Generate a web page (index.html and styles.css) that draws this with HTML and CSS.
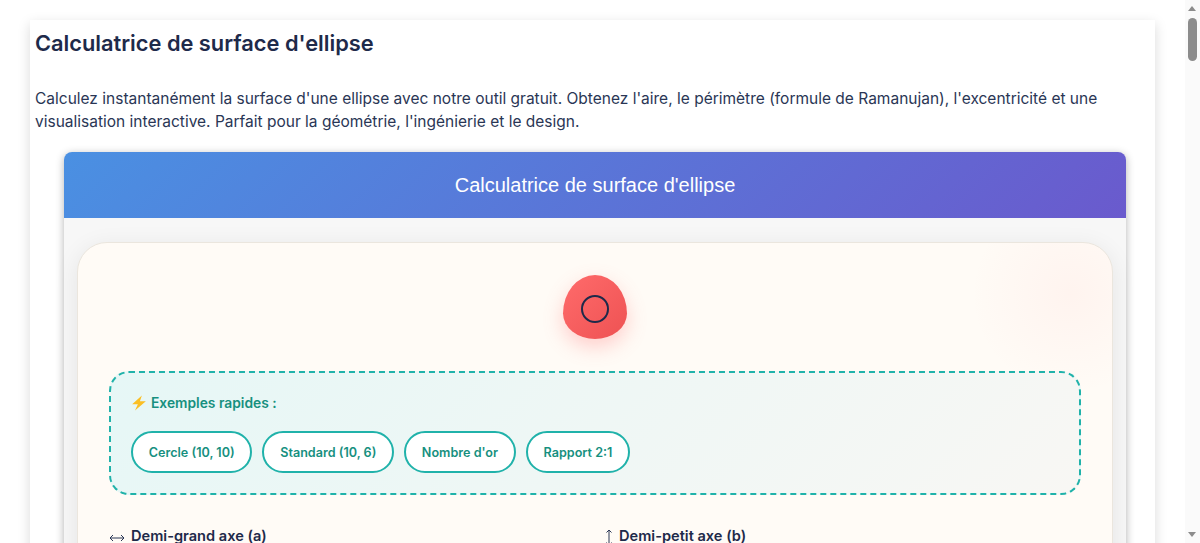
FILE: index.html
```html
<!DOCTYPE html>
<html lang="fr">
<head>
    <meta charset="UTF-8">
    <meta name="viewport" content="width=device-width, initial-scale=1.0">
    <title>Calculatrice de surface d'ellipse</title>
    <link rel="stylesheet" href="styles.css">
</head>
<body>
    <div class="page">
        <main class="article">
            <h1>Calculatrice de surface d'ellipse</h1>
            <p class="intro">Calculez instantanément la surface d'une ellipse avec notre outil gratuit. Obtenez l'aire, le périmètre (formule de Ramanujan), l'excentricité et une visualisation interactive. Parfait pour la géométrie, l'ingénierie et le design.</p>

            <section class="tool">
                <div class="tool-header">Calculatrice de surface d'ellipse</div>
                <div class="tool-body">
                    <div class="calc-card">
                        <div class="calc-icon">
                            <svg width="30" height="30" viewBox="0 0 30 30" aria-hidden="true">
                                <circle cx="15" cy="15" r="13" fill="none" stroke="#1e2a4a" stroke-width="2"/>
                            </svg>
                        </div>

                        <div class="quick">
                            <div class="quick-title">
                                <svg class="bolt" width="16" height="16" viewBox="0 0 14 14" aria-hidden="true">
                                    <path d="M9.5 0.5 L1 8 L6 8 L3.5 13.5 L13 5.5 L7.8 5.5 Z" fill="#fbbf24"/>
                                </svg>
                                Exemples rapides :
                            </div>
                            <div class="quick-buttons">
                                <button class="quick-btn">Cercle (10, 10)</button>
                                <button class="quick-btn">Standard (10, 6)</button>
                                <button class="quick-btn">Nombre d'or</button>
                                <button class="quick-btn">Rapport 2:1</button>
                            </div>
                        </div>

                        <div class="fields">
                            <label class="field-label">
                                <svg class="arrow" width="16" height="22" viewBox="0 0 16 22" aria-hidden="true">
                                    <path d="M1 13 H15 M4 10 L1 13 L4 16 M12 10 L15 13 L12 16" fill="none" stroke="#2a3655" stroke-width="1"/>
                                </svg>
                                Demi-grand axe (a)
                            </label>
                            <label class="field-label">
                                <svg class="arrow" width="9" height="22" viewBox="0 0 9 22" aria-hidden="true">
                                    <path d="M5 5 V20 M2.5 7.5 L5 5 L7.5 7.5 M2.5 17.5 L5 20 L7.5 17.5" fill="none" stroke="#2a3655" stroke-width="1"/>
                                </svg>
                                Demi-petit axe (b)
                            </label>
                        </div>
                    </div>
                </div>
            </section>
        </main>

        <div class="scrollbar">
            <span class="scroll-up"></span>
            <span class="scroll-thumb"></span>
            <span class="scroll-down"></span>
        </div>
    </div>
</body>
</html>
```

FILE: styles.css
```css
* {
    margin: 0;
    padding: 0;
    box-sizing: border-box;
}

html, body {
    height: 100%;
    overflow: hidden;
}

body {
    font-family: 'Inter', 'Noto Sans', sans-serif;
    background: #fff;
    color: #1e2a4a;
}

.page {
    display: flex;
    height: 543px;
    overflow: hidden;
}

.article {
    flex: 0 0 1125px;
    margin: 20px 30px 0;
    padding: 5px;
    height: 900px;
    background: #fff;
    box-shadow: 0 4px 12px rgba(0, 0, 0, 0.15);
}

h1 {
    font-size: 21.8px;
    font-weight: 600;
    line-height: 36px;
    margin-bottom: 26px;
}

.intro {
    font-size: 15.5px;
    line-height: 23px;
    color: #2a3655;
}

.tool {
    width: 1062px;
    margin: 19px 0 0 29px;
    border-radius: 8px;
    background: #f5f5f5;
    box-shadow: 0 2px 8px rgba(0, 0, 0, 0.3);
}

.tool-header {
    height: 66px;
    display: flex;
    align-items: center;
    justify-content: center;
    font-family: 'Liberation Sans', Arial, sans-serif;
    font-size: 20px;
    color: #fff;
    border-radius: 8px 8px 0 0;
    background: linear-gradient(135deg, #4a90e2, #6a5acd);
}

.tool-body {
    padding: 24px 13px 0;
    height: 700px;
    background: #f7f7f7;
}

.calc-card {
    height: 640px;
    padding: 32px 31px 0;
    border: 1px solid #ebe6de;
    border-radius: 30px;
    background:
        radial-gradient(circle at 96% 8%, rgba(255, 107, 107, 0.05), rgba(255, 107, 107, 0) 100px),
        #fffbf6;
    box-shadow: 0 5px 25px rgba(0, 0, 0, 0.08);
}

.calc-icon {
    width: 64px;
    height: 64px;
    margin: 0 auto 32px;
    padding-top: 4px;
    display: flex;
    align-items: center;
    justify-content: center;
    border-radius: 50% 50% 50% 50% / 60% 60% 40% 40%;
    background: linear-gradient(135deg, #ff6b6b, #ee5253);
    box-shadow: 0 8px 20px rgba(255, 107, 107, 0.3);
}

.quick {
    height: 124px;
    padding: 20px;
    border: 2px dashed #20b2aa;
    border-radius: 20px;
    background: linear-gradient(135deg, #e6f7f6, #f8f7f4);
}

.quick-title {
    display: flex;
    align-items: center;
    gap: 4px;
    height: 20px;
    font-size: 13.8px;
    font-weight: 600;
    color: #17907f;
}

.quick-buttons {
    display: flex;
    gap: 10px;
    margin-top: 18px;
}

.quick-btn {
    height: 42px;
    padding: 0 15.75px;
    border: 2px solid #20b2aa;
    border-radius: 25px;
    background: #fff;
    font-family: inherit;
    font-size: 12.6px;
    font-weight: 600;
    color: #17907f;
}

.fields {
    display: grid;
    grid-template-columns: 477px 477px;
    gap: 18px;
    margin-top: 30px;
}

.field-label {
    display: flex;
    align-items: center;
    gap: 6px;
    font-size: 14.6px;
    font-weight: 600;
    line-height: 22px;
}

.scrollbar {
    flex: 0 0 15px;
    height: 543px;
    position: relative;
    background: #fafafa;
}

.scroll-thumb {
    position: absolute;
    top: 18px;
    left: 3px;
    width: 9px;
    height: 43px;
    border-radius: 5px;
    background: #8c8c8c;
}

.scroll-up,
.scroll-down {
    position: absolute;
    left: 3px;
    width: 0;
    height: 0;
    border-left: 4.5px solid transparent;
    border-right: 4.5px solid transparent;
}

.scroll-up {
    top: 6px;
    border-bottom: 5px solid #8c8c8c;
}

.scroll-down {
    bottom: 6px;
    border-top: 5px solid #8c8c8c;
}
```
